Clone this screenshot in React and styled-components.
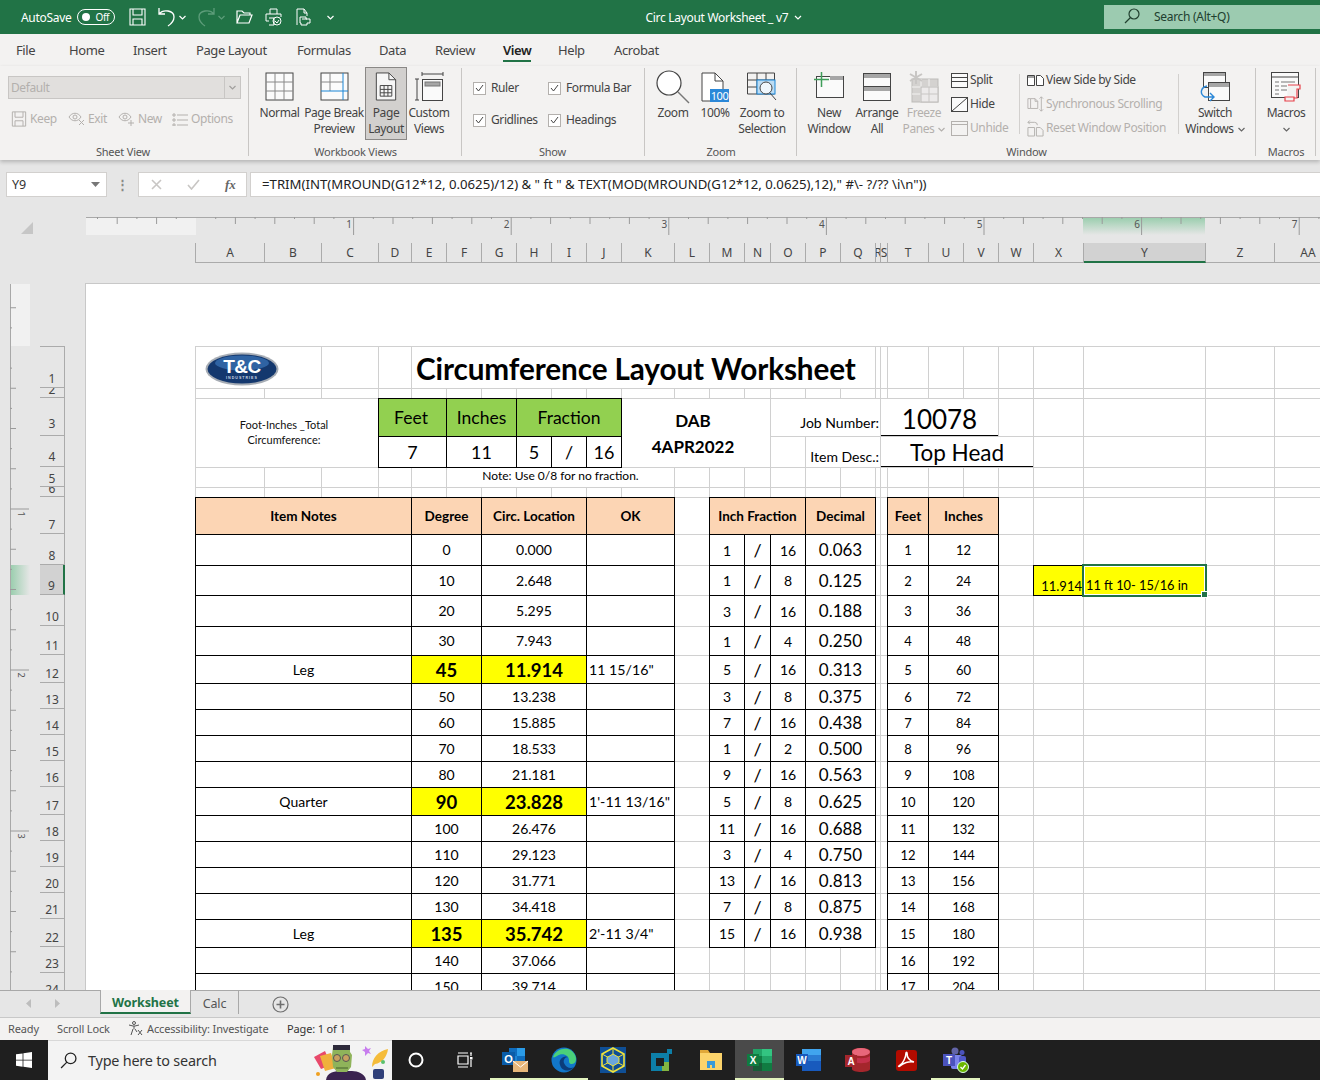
import React from 'react';
import styled, { createGlobalStyle } from 'styled-components';

const UI = '"Noto Sans", "Open Sans", sans-serif';
const SHEET = 'Lato, "Liberation Sans", sans-serif';

const Global = createGlobalStyle`
  html, body { margin: 0; padding: 0; background: #e6e6e6; }
  * { box-sizing: border-box; }
  svg { display: block; flex: none; }
`;

const Shell = styled.div`
  width: 1320px;
  height: 1080px;
  display: flex;
  flex-direction: column;
  overflow: hidden;
  font-family: ${UI};
  color: #333;
`;

/* title bar */
const TitleBar = styled.div`
  height: 34px;
  flex: none;
  background: #217346;
  color: #fff;
  display: flex;
  align-items: center;
  padding-left: 21px;
  font-size: 12px;
  letter-spacing: -0.3px;
`;
const Toggle = styled.div`
  width: 38px;
  height: 16px;
  margin-left: 6px;
  border: 1px solid #fff;
  border-radius: 8px;
  display: flex;
  align-items: center;
  padding-left: 4px;
  gap: 5px;
  font-size: 10px;
  &::before {
    content: '';
    width: 8px;
    height: 8px;
    border-radius: 50%;
    background: #fff;
  }
`;
const Qat = styled.div`
  display: flex;
  align-items: center;
  margin-left: ${(p) => p.$ml}px;
`;
const DocTitle = styled.div`
  margin-left: 311px;
  width: 142px;
  white-space: nowrap;
`;
const SearchBox = styled.div`
  margin-left: auto;
  width: 216px;
  height: 24px;
  padding: 0 0 2px 20px;
  background: #9ccbb0;
  color: #21402f;
  display: flex;
  align-items: center;
  gap: 14px;
`;

/* ribbon tabs */
const TabRow = styled.div`
  height: 32px;
  flex: none;
  background: #f3f2f1;
  display: flex;
  padding-left: 16px;
  font-size: 13px;
`;
const TabSlot = styled.div`
  width: ${(p) => p.$w}px;
  flex: none;
  display: flex;
`;
const RibbonTab = styled.div`
  height: 28px;
  padding-top: 6px;
  display: flex;
  align-items: center;
  white-space: nowrap;
  letter-spacing: -0.4px;
  font-weight: ${(p) => (p.$on ? 600 : 400)};
  border-bottom: ${(p) => (p.$on ? '2px solid #217346' : '2px solid transparent')};
  color: ${(p) => (p.$on ? '#222' : '#444')};
`;

/* ribbon */
const Ribbon = styled.div`
  height: 94px;
  flex: none;
  background: #f3f2f1;
  display: flex;
  padding-top: 2px;
  box-shadow: 0 2px 4px rgba(0, 0, 0, 0.22);
  position: relative;
  z-index: 2;
  font-size: 12px;
  letter-spacing: -0.4px;
  line-height: 16px;
`;
const Group = styled.div`
  width: ${(p) => p.$w}px;
  flex: none;
  position: relative;
  display: flex;
  flex-direction: column;
  &::after {
    content: '';
    position: absolute;
    right: 0;
    top: 0;
    bottom: 4px;
    width: 1px;
    background: #c8c6c4;
  }
`;
const GroupBody = styled.div`
  flex: 1;
  display: flex;
  padding-left: ${(p) => p.$pl || 0}px;
  margin-top: -1px;
`;
const GroupLabel = styled.div`
  height: 16px;
  text-align: center;
  font-size: 11px;
  color: #555;
  line-height: 16px;
  letter-spacing: -0.2px;
  padding-right: ${(p) => p.$pr || 0}px;
`;
const LargeBtn = styled.div`
  width: ${(p) => p.$w}px;
  height: 73px;
  flex: none;
  display: flex;
  flex-direction: column;
  align-items: center;
  text-align: center;
  white-space: nowrap;
  color: ${(p) => (p.$off ? '#b3b0ad' : '#444')};
  background: ${(p) => (p.$on ? '#d2d0ce' : 'transparent')};
  border: 1px solid ${(p) => (p.$on ? '#8a8886' : 'transparent')};
`;
const LargeIcon = styled.div`
  height: 37px;
  display: flex;
  align-items: center;
  justify-content: center;
`;
const BtnLine = styled.div`
  height: 16px;
  display: flex;
  align-items: center;
  gap: 4px;
`;
const Combo = styled.div`
  width: 233px;
  height: 23px;
  margin-top: 8px;
  background: #e1dfdd;
  border: 1px solid #c8c6c4;
  color: #b3b0ad;
  display: flex;
  align-items: center;
  padding-left: 2px;
  position: relative;
`;
const ComboArrow = styled.div`
  margin-left: auto;
  width: 16px;
  height: 100%;
  border-left: 1px solid #c8c6c4;
  display: flex;
  align-items: center;
  justify-content: center;
`;
const SheetViewBody = styled.div`
  padding-left: 8px;
  flex: 1;
`;
const SheetRow = styled.div`
  display: flex;
  align-items: center;
  height: 24px;
  margin-top: 8px;
  padding-left: 3px;
  color: #b3b0ad;
`;
const SheetBtn = styled.div`
  width: ${(p) => p.$w}px;
  display: flex;
  align-items: center;
  gap: 3px;
  flex: none;
`;
const ChecksGrid = styled.div`
  display: grid;
  grid-template-columns: 75px 90px;
  grid-auto-rows: 32px;
  padding: 4px 0 0 11px;
  white-space: nowrap;
  color: #444;
`;
const CheckItem = styled.div`
  display: flex;
  align-items: center;
  gap: 5px;
`;
const CheckBox = styled.div`
  width: 13px;
  height: 13px;
  background: #fff;
  border: 1px solid #b3b0ad;
  display: flex;
  align-items: center;
  justify-content: center;
`;
const SmallStack = styled.div`
  width: ${(p) => p.$w}px;
  flex: none;
  margin-left: ${(p) => p.$ml || 0}px;
  padding-left: ${(p) => p.$pl || 0}px;
  padding-top: 1px;
  display: flex;
  flex-direction: column;
  position: relative;
  &::after {
    content: '';
    position: absolute;
    right: 0;
    top: 7px;
    height: 60px;
    width: 1px;
    background: #d2d0ce;
  }
`;
const SmallBtn = styled.div`
  height: 24px;
  display: flex;
  align-items: center;
  gap: 2px;
  white-space: nowrap;
  color: ${(p) => (p.$off ? '#b3b0ad' : '#444')};
`;

/* formula bar */
const FormulaRow = styled.div`
  height: 40px;
  flex: none;
  background: #e6e6e6;
  display: flex;
  align-items: flex-start;
  padding: 12px 0 0 6px;
  font-size: 12.5px;
`;
const NameBox = styled.div`
  width: 101px;
  height: 25px;
  background: #fff;
  border: 1px solid #d2d0ce;
  display: flex;
  align-items: center;
  justify-content: space-between;
  padding: 0 6px 0 5px;
`;
const Dots = styled.div`
  width: 31px;
  height: 25px;
  display: flex;
  align-items: center;
  justify-content: center;
  color: #8a8886;
  font-weight: 700;
`;
const FnBox = styled.div`
  width: 109px;
  height: 25px;
  background: #fff;
  border: 1px solid #d2d0ce;
  display: flex;
  align-items: center;
  padding-left: 12px;
  gap: 25px;
`;
const FnMark = styled.span`
  font-family: "Liberation Serif", serif;
  font-style: italic;
  font-weight: 700;
  font-size: 13px;
  color: #666;
`;
const FormulaInput = styled.div`
  flex: 1;
  height: 25px;
  margin-left: 3px;
  background: #fff;
  border: 1px solid #d2d0ce;
  border-right: none;
  display: flex;
  align-items: center;
  padding: 0 0 2px 11px;
  white-space: nowrap;
  color: #222;
  font-size: 13.2px;
`;

/* sheet area */
const SheetArea = styled.div`
  flex: 1;
  min-height: 0;
  background: #e6e6e6;
  display: flex;
  flex-direction: column;
  overflow: hidden;
  padding-top: 17px;
`;
const RulerRow = styled.div`
  display: flex;
  height: 18px;
  flex: none;
`;
const CornerSlot = styled.div`
  width: 86px;
  flex: none;
  padding: 5px 0 0 21px;
`;
const ColHeaderRow = styled.div`
  display: flex;
  height: 20px;
  flex: none;
  margin: 8px 0 0 195px;
  border-left: 1px solid #ababab;
  font-size: 12px;
  color: #444;
`;
const ColHeader = styled.div`
  width: ${(p) => p.$w}px;
  flex: none;
  display: flex;
  align-items: center;
  justify-content: center;
  overflow: hidden;
  border-right: 1px solid #ababab;
  border-bottom: ${(p) => (p.$sel ? '2px solid #217346' : '1px solid #ababab')};
  background: ${(p) => (p.$sel ? '#d2d2d2' : 'transparent')};
`;
const SheetBody = styled.div`
  flex: 1;
  min-height: 0;
  display: flex;
  margin-top: 20px;
`;
const VRulerSlot = styled.div`
  margin: 1px 0 0 10px;
  width: 20px;
  flex: none;
`;
const RowHeaderCol = styled.div`
  margin-left: 10px;
  width: 25px;
  flex: none;
  padding-top: 63px;
  font-size: 12px;
  color: #444;
`;
const RowHeader = styled.div`
  height: ${(p) => p.$h}px;
  display: flex;
  align-items: flex-end;
  justify-content: center;
  overflow: hidden;
  line-height: 15px;
  padding-bottom: ${(p) => p.$pb}px;
  border-right: ${(p) => (p.$sel ? '2px solid #217346' : '1px solid #ababab')};
  border-bottom: 1px solid #ababab;
  border-top: ${(p) => (p.$first ? '1px solid #ababab' : 'none')};
  background: ${(p) => (p.$sel ? '#d2d2d2' : 'transparent')};
`;
const Page = styled.div`
  flex: 1;
  min-width: 0;
  margin-left: 20px;
  background: #fff;
  border-top: 1px solid #c8c8c8;
  border-left: 1px solid #c8c8c8;
  padding: 62px 0 0 109px;
  overflow: hidden;
`;
const Grid = styled.div`
  display: grid;
  width: max-content;
  border-top: 1px solid #d0d0d0;
  border-left: 1px solid #d0d0d0;
  grid-template-columns: ${(p) => p.$cols};
  grid-template-rows: ${(p) => p.$rows};
  font-family: ${SHEET};
  color: #000;
  font-size: 14px;
`;
const GridLine = styled.div`
  grid-column: ${(p) => p.$c};
  grid-row: ${(p) => p.$r};
  border-right: 1px solid #d0d0d0;
  border-bottom: 1px solid #d0d0d0;
`;
const Cell = styled.div`
  grid-column: ${(p) => p.$c} / span ${(p) => p.$cs || 1};
  grid-row: ${(p) => p.$r} / span ${(p) => p.$rs || 1};
  margin: 0 1px 1px 0;
  min-width: 0;
  display: flex;
  flex-direction: ${(p) => (p.$stack ? 'column' : 'row')};
  align-items: center;
  justify-content: ${(p) => p.$justify || 'center'};
  padding: ${(p) => p.$pad || 0};
  white-space: nowrap;
  overflow: hidden;
  background: ${(p) => p.$bg || '#fff'};
  box-shadow: ${(p) => (p.$box ? '0 0 0 1px #000' : 'none')};
  font-size: ${(p) => p.$fs || 14}px;
  font-weight: ${(p) => (p.$bold ? 700 : 400)};
  border-bottom: ${(p) => (p.$under ? '1px solid #000' : 'none')};
`;
const SmallNote = styled.div`
  font-size: 11px;
  line-height: 15px;
  color: #111;
`;
const TitleText = styled.div`
  font-size: 29.7px;
  font-weight: 700;
  letter-spacing: -0.1px;
`;
const InitialsLine = styled.div`
  font-size: 17px;
  font-weight: 700;
  line-height: 26px;
`;
const ActiveCell = styled.div`
  grid-column: 25;
  grid-row: 9;
  margin: 0 1px 1px 0;
  background: #ff0;
  display: flex;
  align-items: flex-end;
  padding: 0 0 2px 2px;
  white-space: nowrap;
  font-size: 12.8px;
  outline: 2px solid #217346;
  box-shadow: inset 0 0 0 1px #fff;
  position: relative;
  &::after {
    content: '';
    position: absolute;
    right: -3px;
    bottom: -3px;
    width: 5px;
    height: 5px;
    background: #217346;
    border: 1px solid #fff;
  }
`;

/* sheet tabs, status */
const TabsBar = styled.div`
  height: 28px;
  flex: none;
  background: #e6e6e6;
  border-top: 1px solid #a8a8a8;
  border-bottom: 1px solid #c8c8c8;
  display: flex;
  align-items: flex-start;
  font-size: 12.5px;
  position: relative;
  z-index: 2;
`;
const NavArrows = styled.div`
  width: 100px;
  height: 25px;
  display: flex;
  align-items: center;
  gap: 22px;
  padding-left: 26px;
`;
const SheetTab = styled.div`
  height: 24px;
  padding-top: 2px;
  margin-top: -1px;
  width: ${(p) => p.$w}px;
  display: flex;
  align-items: center;
  justify-content: center;
  letter-spacing: -0.1px;
  background: ${(p) => (p.$on ? '#f3f2f1' : 'transparent')};
  color: ${(p) => (p.$on ? '#217346' : '#555')};
  font-weight: ${(p) => (p.$on ? 700 : 400)};
  border-left: ${(p) => (p.$on ? '1px solid #a8a8a8' : 'none')};
  border-right: 1px solid #a8a8a8;
  border-bottom: ${(p) => (p.$on ? '2px solid #217346' : 'none')};
`;
const AddSheet = styled.div`
  margin: 5px 0 0 33px;
`;
const StatusBar = styled.div`
  height: 22px;
  flex: none;
  background: #f3f2f1;
  display: flex;
  align-items: center;
  font-size: 11px;
  letter-spacing: -0.15px;
  color: #555;
  padding: 0 0 2px 8px;
`;
const StatusItem = styled.div`
  width: ${(p) => p.$w}px;
  flex: none;
  white-space: nowrap;
  display: flex;
  align-items: center;
  gap: 4px;
  color: ${(p) => (p.$dark ? '#333' : '#555')};
`;

/* taskbar */
const Taskbar = styled.div`
  height: 40px;
  flex: none;
  background: #1f1f1f;
  display: flex;
  overflow: hidden;
`;
const StartBtn = styled.div`
  width: 48px;
  display: flex;
  align-items: center;
  justify-content: center;
`;
const TaskSearch = styled.div`
  width: 344px;
  background: #f3f3f3;
  border-top: 1px solid #d8d8d8;
  display: flex;
  align-items: center;
  padding-left: 12px;
  gap: 11px;
  font-size: 14.4px;
  color: #333;
  letter-spacing: -0.2px;
  overflow: hidden;
`;
const SearchText = styled.span`
  margin-top: -1px;
`;
const Mascot = styled.div`
  margin-left: auto;
  height: 40px;
  margin-right: 2px;
`;
const TaskBtn = styled.div`
  width: ${(p) => p.$w || 49}px;
  flex: none;
  display: flex;
  align-items: center;
  justify-content: center;
  background: ${(p) => (p.$active ? '#4a4a4a' : 'transparent')};
  border-bottom: 2px solid ${(p) => (p.$running ? '#e3f4bf' : 'transparent')};
  padding-top: 2px;
`;

/* ---- icons ---- */
const S = '#444';
const D = '#b3b0ad';

const GridIcon = ({ blue }) => (
  <svg width="29" height="29" viewBox="0 0 29 29" fill="#fbfbfb">
    <rect x="1" y="1" width="27" height="27" stroke={S} />
    <path d="M10 1v27M19 1v27M1 10h27M1 19h27" stroke={blue ? 'none' : '#888'} fill="none" />
    {blue && <path d="M10 1v18M1 10h22" stroke="#888" fill="none" />}
    {blue && <path d="M23 1v27M1 19h27" stroke="#1b86d6" fill="none" />}
  </svg>
);
const PageLayoutIcon = () => (
  <svg width="22" height="29" viewBox="0 0 22 30" fill="none" stroke={S}>
    <path d="M1 1h13l7 7v21H1z" fill="#f6f6f6" />
    <path d="M14 1v7h7" />
    <path d="M5 14h12v11H5zM5 18h12M5 21.5h12M9 14v11M13 14v11" />
  </svg>
);
const CustomViewsIcon = () => (
  <svg width="29" height="29" viewBox="0 0 29 29" fill="none" stroke={S}>
    <path d="M7 2h21M7 0v4M28 0v4M0 7h4M0 28h4M2 7v21" />
    <rect x="7.5" y="7.5" width="20" height="21" fill="#fafafa" />
    <rect x="10" y="10" width="15" height="4" fill="#a6a6a6" stroke="#777" />
  </svg>
);
const ZoomIcon = () => (
  <svg width="34" height="34" viewBox="0 0 34 34" fill="none">
    <circle cx="13" cy="13" r="12" stroke={S} strokeWidth="1.2" fill="#fff" />
    <path d="M22 22l11 11" stroke="#777" strokeWidth="1.4" />
  </svg>
);
const HundredIcon = () => (
  <svg width="28" height="30" viewBox="0 0 28 30">
    <path d="M1 1h13l8 8v20H1z" fill="#fff" stroke={S} />
    <path d="M14 1v8h8" fill="none" stroke={S} />
    <rect x="9" y="17" width="19" height="13" fill="#2b88d8" />
    <text x="18.5" y="27.5" textAnchor="middle" fontSize="11" fill="#fff" fontFamily="Noto Sans">100</text>
  </svg>
);
const ZoomSelIcon = () => (
  <svg width="30" height="30" viewBox="0 0 30 30" fill="none">
    <path d="M.5 1h27v21H.5zM.5 8h27M.5 15h10M10 1v21M19 1v7" stroke={S} />
    <rect x="10" y="8" width="18" height="14" fill="#bcdcf3" stroke="#1b86d6" />
    <circle cx="19" cy="16" r="6" fill="#eef6fc" stroke={S} />
    <path d="M23 21l6 7" stroke={S} />
  </svg>
);
const NewWindowIcon = () => (
  <svg width="32" height="30" viewBox="0 0 32 30" fill="none">
    <rect x="3.5" y="4.5" width="27" height="21" fill="#fafafa" stroke={S} />
    <rect x="17" y="4" width="13" height="4" fill="#a6a6a6" />
    <path d="M8.5 0v15M1 7.5h15" stroke="#3f9e5a" strokeWidth="1.5" />
  </svg>
);
const ArrangeIcon = () => (
  <svg width="28" height="28" viewBox="0 0 28 28" fill="#fafafa" stroke={S}>
    <rect x=".5" y=".5" width="27" height="13" />
    <rect x=".5" y="13.5" width="27" height="14" />
    <rect x="1" y="1" width="26" height="4" fill="#a6a6a6" stroke="none" />
    <rect x="1" y="14" width="26" height="4" fill="#a6a6a6" stroke="none" />
  </svg>
);
const FreezeIcon = () => (
  <svg width="30" height="32" viewBox="0 0 30 32" fill="none">
    <rect x="3" y="8" width="26" height="23" fill="#d4d2d0" stroke="#bdbbb9" />
    <path d="M3 16h26M3 23h26M12 8v23M20 8v23" stroke="#f3f2f1" />
    <rect x="12" y="16" width="17" height="15" fill="#eceaea" stroke="#bdbbb9" />
    <path d="M12 23h17M20 16v15" stroke="#c8c6c4" />
    <path d="M7 0v13M1 3l12 7M13 3L1 10" stroke="#c8c6c4" strokeWidth="2" />
  </svg>
);
const SplitIcon = () => (
  <svg width="17" height="15" viewBox="0 0 17 15" fill="#fafafa" stroke={S}>
    <rect x=".5" y=".5" width="16" height="14" />
    <path d="M1 4.5h15M1 8.5h15" />
  </svg>
);
const HideIcon = () => (
  <svg width="17" height="15" viewBox="0 0 17 15" fill="#fafafa" stroke={S}>
    <rect x=".5" y=".5" width="16" height="14" />
    <path d="M1 14L16 1" />
  </svg>
);
const UnhideIcon = () => (
  <svg width="17" height="15" viewBox="0 0 17 15" fill="#f3f2f1" stroke={D}>
    <rect x=".5" y=".5" width="16" height="14" />
    <path d="M1 3.5h15" />
  </svg>
);
const SideBySideIcon = () => (
  <svg width="17" height="12" viewBox="0 0 17 12" fill="#fff" stroke={S}>
    <path d="M.5 1.5h7v10h-7zM9.5 1.5h4l3 3v7h-7z" />
    <path d="M1 3h6" />
  </svg>
);
const SyncIcon = () => (
  <svg width="17" height="18" viewBox="0 0 19 18" fill="none" stroke={D}>
    <path d="M1 3h3M1 3v11h3M4 3h5l3 3v8H4zM9 3v3h3" />
    <path d="M16 1v16M14 3l2-2 2 2M14 15l2 2 2-2" />
  </svg>
);
const ResetIcon = () => (
  <svg width="17" height="18" viewBox="0 0 18 18" fill="none" stroke={D}>
    <path d="M1 8.5h7v9H1zM10 8.5h4l3 3v6h-7z" />
    <path d="M3 1L1 3l2 2M1 3h7a3 3 0 0 1 3 3" />
  </svg>
);
const SwitchIcon = () => (
  <svg width="30" height="30" viewBox="0 0 30 30" fill="none">
    <rect x="3.5" y=".5" width="22" height="15" fill="#fafafa" stroke={S} />
    <rect x="4" y="1" width="21" height="3" fill="#a6a6a6" />
    <rect x="8.5" y="10.5" width="21" height="18" fill="#fafafa" stroke={S} />
    <rect x="9" y="11" width="20" height="4" fill="#a6a6a6" />
    <path d="M7 14c-6 1-8 8-2 11h9M10 21l4 4-4 4" stroke="#2b88d8" strokeWidth="1.4" fill="none" />
  </svg>
);
const MacrosIcon = () => (
  <svg width="30" height="30" viewBox="0 0 30 30" fill="none">
    <rect x=".5" y=".5" width="27" height="25" fill="#fafafa" stroke={S} />
    <path d="M1 5h26" stroke={S} />
    <path d="M4 10h4M10 10h14M4 14h4M10 14h6M4 18h4M10 18h6M4 22h4" stroke="#777" />
    <path d="M17 13h12v4h-3v9h-10" fill="#f3f2f1" stroke="#e8404a" strokeWidth="1.2" />
    <path d="M14 25h9v4h-9z" fill="#f3f2f1" stroke="#e8404a" strokeWidth="1.2" />
  </svg>
);
const FloppyIcon = ({ c = D, w = 17, h = 18 }) => (
  <svg width={w} height={h} viewBox="0 0 17 18" fill="none" stroke={c} strokeWidth="1.1">
    <path d="M1 1h15v16H1zM4 1v6h9V1M4 17v-6h9v6" />
  </svg>
);
const Eye = ({ mark }) => (
  <svg width="17" height="14" viewBox="0 0 17 14" fill="none" stroke={D}>
    <path d="M1 5c3-5 9-5 12 0-3 5-9 5-12 0z" />
    <circle cx="7" cy="5" r="2" />
    {mark === 'x' ? <path d="M11 8l5 5M16 8l-5 5" /> : <path d="M13 8v6M10 11h6" />}
  </svg>
);
const ListIcon = () => (
  <svg width="16" height="13" viewBox="0 0 16 13" fill="none" stroke={D}>
    <path d="M1 1h2v2H1zM1 6h2v2H1zM1 11h2v2H1zM5 2h11M5 7h11M5 12h11" />
  </svg>
);
const Check = () => (
  <svg width="9" height="8" viewBox="0 0 9 8" fill="none" stroke="#444">
    <path d="M1 4l2.5 3L8 1" />
  </svg>
);
const Chevron = ({ c = '#666', w = 7 }) => (
  <svg width={w} height="5" viewBox="0 0 7 5" fill="none" stroke={c} strokeWidth="1.2">
    <path d="M.5 1l3 3 3-3" />
  </svg>
);
const Undo = ({ c }) => (
  <svg width="18" height="20" viewBox="0 0 18 20" fill="none" stroke={c} strokeWidth="1.3">
    <path d="M1 1v6h6M1 7c4-5 15-4 15 3 0 4-3 7-6 9" />
  </svg>
);
const Redo = ({ c }) => (
  <svg width="18" height="20" viewBox="0 0 18 20" fill="none" stroke={c} strokeWidth="1.3">
    <path d="M17 1v6h-6M17 7C13 2 2 3 2 10c0 4 3 7 6 9" />
  </svg>
);
const OpenIcon = () => (
  <svg width="17" height="14" viewBox="0 0 17 14" fill="none" stroke="#fff" strokeWidth="1.2">
    <path d="M1 13V1h5l2 2h6v2M1 13h12l3-8H4z" />
  </svg>
);
const PrintCheck = () => (
  <svg width="17" height="18" viewBox="0 0 17 18" fill="none" stroke="#fff">
    <path d="M5 6V1h7v5M4 13H1V6h15v3M4 10h5v7H4" />
    <circle cx="12" cy="13" r="4" />
    <path d="M10 13l2 2 2-3" />
  </svg>
);
const PrintDoc = () => (
  <svg width="16" height="18" viewBox="0 0 16 18" fill="none" stroke="#fff">
    <path d="M2 17V1h7l3 4v3M9 1v4h3" />
    <path d="M5 15V9h6v2h4v4h-3v2H6v-2zM12 11H7" />
  </svg>
);
const SearchGlyph = ({ c, s = 16 }) => (
  <svg width={s} height={s} viewBox="0 0 16 16" fill="none" stroke={c} strokeWidth="1.2">
    <circle cx="10" cy="6" r="5" />
    <path d="M6.5 9.5L1 15" />
  </svg>
);
const AccessIcon = () => (
  <svg width="15" height="15" viewBox="0 0 15 15" fill="none" stroke="#555">
    <circle cx="6" cy="2" r="1.5" />
    <path d="M1 4l4 1h2l4-1M6 5v3M5 8l-2 6M7 8l2 3M10 9l4 5M14 9l-4 5" />
  </svg>
);
const PlusCircle = () => (
  <svg width="17" height="17" viewBox="0 0 17 17" fill="none" stroke="#6f6f6f" strokeWidth="1.2">
    <circle cx="8.5" cy="8.5" r="7.5" />
    <path d="M8.5 4.5v8M4.5 8.5h8" strokeWidth="1.6" />
  </svg>
);
const TCLogo = () => (
  <svg width="74" height="34" viewBox="0 0 74 34">
    <ellipse cx="37" cy="17" rx="36.5" ry="16.5" fill="#a7adb5" />
    <ellipse cx="37" cy="17" rx="34.5" ry="14.5" fill="#14386e" />
    <ellipse cx="37" cy="11" rx="27" ry="7.5" fill="#2f63a3" />
    <text x="37" y="21" textAnchor="middle" fontSize="19" fontWeight="900" fill="#fff" fontFamily="Liberation Sans" letterSpacing="-0.5">T&amp;C</text>
    <text x="37" y="26.5" textAnchor="middle" fontSize="3.6" fontWeight="700" fill="#cbd6e4" letterSpacing="1" fontFamily="Liberation Sans">INDUSTRIES</text>
  </svg>
);

/* rulers */
const PX_IN = 157.6;
const TopRuler = () => {
  const w = 1234;
  const marks = [];
  for (let i = -5; i <= 60; i++) {
    const x = 196 - 86 + (i * PX_IN) / 8;
    if (x < 0 || x > w) continue;
    const len = i % 8 === 0 ? 18 : i % 2 === 0 ? 7 : 2;
    if (i === 0) continue;
    marks.push(<path key={i} d={`M${x} 0v${len}`} stroke="#9a9a9a" />);
  }
  return (
    <svg width={w} height="18" viewBox={`0 0 ${w} 18`}>
      <defs>
        <linearGradient id="topSel" x1="0" y1="0" x2="0" y2="1">
          <stop offset="0" stopColor="#98cdac" />
          <stop offset="1" stopColor="#e6e6e6" />
        </linearGradient>
      </defs>
      <rect x="0" y="0" width="110" height="18" fill="#f1f1f1" />
      <rect x="997" y="0" width="122" height="18" fill="url(#topSel)" />
      <path d={`M0 .5h${w}`} stroke="#a8a8a8" />
      {marks}
      {[1, 2, 3, 4, 5, 6, 7].map((n) => (
        <text key={n} x={110 + n * PX_IN - 4.5} y="11" textAnchor="middle" fontSize="10" fill="#555" fontFamily="Noto Sans">{n}</text>
      ))}
    </svg>
  );
};
const SideRuler = () => {
  const h = 706;
  const base = 64;
  const step = 161;
  const marks = [];
  for (let i = -2; i <= 40; i++) {
    const y = base + (i * step) / 8;
    if (y < 0 || y > h || i === 0) continue;
    const len = i % 8 === 0 ? 19 : i % 2 === 0 ? 6 : 2;
    marks.push(<path key={i} d={`M0 ${y}h${len}`} stroke="#9a9a9a" />);
  }
  return (
    <svg width="20" height={h} viewBox={`0 0 20 ${h}`}>
      <defs>
        <linearGradient id="sideSel" x1="0" y1="0" x2="1" y2="0">
          <stop offset="0" stopColor="#98cdac" />
          <stop offset="1" stopColor="#e6e6e6" />
        </linearGradient>
      </defs>
      <rect width="20" height="62" fill="#f1f1f1" />
      <rect y="281" width="20" height="30" fill="url(#sideSel)" />
      <path d={`M.5 0v${h}`} stroke="#a8a8a8" />
      {marks}
      {[1, 2, 3].map((n) => (
        <text key={n} transform={`translate(8 ${base + n * step + 5}) rotate(90)`} textAnchor="middle" fontSize="9" fill="#555" fontFamily="Noto Sans">{n}</text>
      ))}
    </svg>
  );
};

/* taskbar art */
const WinLogo = () => (
  <svg width="16" height="16" viewBox="0 0 16 16" fill="#fff">
    <path d="M0 2.3l6.6-.9v6.3H0zM7.4 1.3L16 0v7.7H7.4zM0 8.4h6.6v6.3L0 13.8zM7.4 8.4H16V16l-8.6-1.2z" />
  </svg>
);
const MascotArt = () => (
  <svg width="78" height="40" viewBox="0 0 78 40">
    <path d="M2 16l11-6 6 14-10 4z" fill="#e8496b" />
    <path d="M8 15l11-3 5 15-11 3z" fill="#f0b03c" />
    <circle cx="6" cy="33" r="2" fill="#f0a020" />
    <path d="M14 40c0-8 8-10 14-10h12c6 0 14 3 14 10z" fill="#3b2350" />
    <path d="M21 6h17v5l2 3-1 12-4 5H25l-4-5-1-12z" fill="#8fb35a" />
    <path d="M21 4h17v5H21z" fill="#2d2a3a" />
    <circle cx="25" cy="17" r="3.5" fill="#c8a060" stroke="#555" />
    <circle cx="34" cy="17" r="3.5" fill="#c8a060" stroke="#555" />
    <path d="M24 27h12" stroke="#45602c" />
    <path d="M53 5l3 3 3-1-2 3 2 3-3-1-3 3v-4l-3-2 3-1z" fill="#c77dee" />
    <path d="M60 26c0-9 6-16 16-18-1 8-6 14-13 15z" fill="#f5bc3a" />
    <rect x="61" y="28" width="11" height="10" rx="2" fill="#2f3f78" />
    <circle cx="71" cy="21" r="2" fill="#5bc16d" />
  </svg>
);
const Ring = () => (
  <svg width="16" height="16" viewBox="0 0 16 16" fill="none" stroke="#fff" strokeWidth="2">
    <circle cx="8" cy="8" r="6.5" />
  </svg>
);
const TaskView = () => (
  <svg width="16" height="16" viewBox="0 0 16 16" fill="none" stroke="#fff" strokeWidth="1.2">
    <path d="M1 4h10v8H1zM1 1h10M1 15h10M13 1h2M14 1v3M14 8v7" />
    <rect x="13" y="5" width="2.5" height="2.5" fill="#fff" stroke="none" />
  </svg>
);
const OutlookIcon = () => (
  <svg width="28" height="28" viewBox="0 0 28 28">
    <rect x="8" y="2" width="16" height="16" fill="#0f6cbd" />
    <rect x="16" y="2" width="8" height="8" fill="#2a9be8" />
    <rect x="8" y="10" width="8" height="8" fill="#1b84d6" />
    <rect x="1" y="6" width="13" height="13" fill="#0a5ca8" />
    <text x="7.5" y="16.5" textAnchor="middle" fontSize="11" fontWeight="700" fill="#fff" fontFamily="Liberation Sans">O</text>
    <rect x="12" y="15" width="15" height="11" fill="#e8b77a" />
    <path d="M12 15l7.5 6 7.5-6" fill="none" stroke="#fff" />
  </svg>
);
const EdgeIcon = () => (
  <svg width="26" height="26" viewBox="0 0 26 26">
    <circle cx="13" cy="13" r="12.5" fill="#1277c9" />
    <path d="M2 10C5 1 19-2 24 8c2 4 1 9-3 9-3 0-3-2-3-4 0-5-7-8-12-4-2 1-3 2-4 1z" fill="#4ad07a" />
    <path d="M9 18c-2-6 4-10 8-8-3 0-5 3-4 6 2 5 7 6 10 4-3 5-12 5-14-2z" fill="#0b3c7a" />
  </svg>
);
const WebIcon = () => (
  <svg width="26" height="26" viewBox="0 0 26 26">
    <rect x="0" y="0" width="26" height="26" fill="#0f4f96" />
    <path d="M13 1l11 6v12l-11 6-11-6V7z" fill="none" stroke="#f0e33c" strokeWidth="1.6" />
    <path d="M13 1v24M2 7l22 12M24 7L2 19" stroke="#f0e33c" />
    <path d="M13 7l6 3.5v5L13 19l-6-3.5v-5z" fill="#6aa6dc" stroke="#f0e33c" />
  </svg>
);
const SquareIcon = () => (
  <svg width="24" height="24" viewBox="0 0 24 24">
    <rect x="1" y="5" width="18" height="18" fill="#0d7fa8" />
    <path d="M12 14h7v9h-7z" fill="#82b541" />
    <rect x="6" y="10" width="8" height="8" fill="#1f1f1f" />
    <rect x="17" y="1" width="5" height="5" fill="#0d7fa8" />
  </svg>
);
const FolderIcon = () => (
  <svg width="22" height="20" viewBox="0 0 22 20">
    <path d="M0 0h8l2 3h12v17H0z" fill="#e0a83a" />
    <rect x="0" y="3" width="22" height="17" fill="#fbd36b" />
    <path d="M7 18v-7h8v7h-3v-3h-2v3z" fill="#3a9ad9" />
  </svg>
);
const ExcelIcon = () => (
  <svg width="25" height="24" viewBox="0 0 25 24">
    <rect x="6" y="1" width="19" height="22" fill="#185c37" />
    <rect x="15" y="1" width="10" height="7" fill="#33c481" />
    <rect x="6" y="1" width="9" height="7" fill="#21a366" />
    <rect x="6" y="8" width="9" height="7" fill="#107c41" />
    <rect x="15" y="8" width="10" height="7" fill="#21a366" />
    <rect x="15" y="15" width="10" height="8" fill="#107c41" />
    <rect x="0" y="6" width="12" height="12" fill="#107c41" />
    <text x="6" y="16" textAnchor="middle" fontSize="10" fontWeight="700" fill="#fff" fontFamily="Liberation Sans">X</text>
  </svg>
);
const WordIcon = () => (
  <svg width="25" height="24" viewBox="0 0 25 24">
    <rect x="6" y="1" width="19" height="22" fill="#185abd" />
    <rect x="6" y="1" width="19" height="6" fill="#41a5ee" />
    <rect x="6" y="7" width="19" height="6" fill="#2b7cd3" />
    <rect x="0" y="6" width="12" height="12" fill="#185abd" />
    <text x="6" y="16" textAnchor="middle" fontSize="10" fontWeight="700" fill="#fff" fontFamily="Liberation Sans">W</text>
  </svg>
);
const AccessAppIcon = () => (
  <svg width="26" height="24" viewBox="0 0 26 24">
    <path d="M7 3c0-4 18-4 18 0v18c0 4-18 4-18 0z" fill="#a4262c" />
    <ellipse cx="16" cy="4" rx="9" ry="4" fill="#e8677a" />
    <path d="M7 8c4 3 14 3 18 0v5c-4 3-14 3-18 0z" fill="#c4314b" />
    <rect x="0" y="7" width="12" height="12" fill="#a4262c" />
    <text x="6" y="17" textAnchor="middle" fontSize="10" fontWeight="700" fill="#fff" fontFamily="Liberation Sans">A</text>
  </svg>
);
const AcrobatIcon = () => (
  <svg width="21" height="21" viewBox="0 0 21 21">
    <rect width="21" height="21" rx="3" fill="#b30b00" />
    <path d="M3 16c4-2 7-9 7-13 0-1 1-1 1 0 0 5 3 8 7 9-5-1-11 1-14 4-1 1-2 0-1 0z" fill="none" stroke="#fff" strokeWidth="1.5" />
  </svg>
);
const TeamsIcon = () => (
  <svg width="26" height="26" viewBox="0 0 26 26">
    <circle cx="12" cy="4" r="3.5" fill="#6264a7" />
    <circle cx="19" cy="5.5" r="2.5" fill="#4b53bc" />
    <rect x="8" y="8" width="11" height="14" rx="2" fill="#7b83eb" />
    <rect x="16" y="9" width="7" height="11" rx="2" fill="#5059c9" />
    <rect x="0" y="7" width="12" height="12" fill="#4b53bc" />
    <text x="6" y="17" textAnchor="middle" fontSize="10" fontWeight="700" fill="#fff" fontFamily="Liberation Sans">T</text>
    <circle cx="20" cy="20" r="5.5" fill="#6bb700" stroke="#dfe" />
    <path d="M17.5 20l2 2 3-4" fill="none" stroke="#fff" strokeWidth="1.3" />
  </svg>
);

/* ---- data ---- */
const COLS = ['A','B','C','D','E','F','G','H','I','J','K','L','M','N','O','P','Q','R','S','T','U','V','W','X','Y','Z','AA'];
const COL_W = [69,57,57,33,35,35,35,35,35,35,53,35,35,26,35,35,35,5,7,41,35,35,35,50,122,69,67];
const ROW_H = [42,10,38,31,20,10,37,31,30,31,29,28,26,26,26,26,28,26,26,26,26,28,26,26];
const ROW_LIFT = { 1: 1, 2: 0, 3: 4, 4: 2, 5: 0, 6: 0 };
const TALL_ROWS = [8, 10, 11];

const READINGS = [
  ['', 0, '0.000'], ['', 10, '2.648'], ['', 20, '5.295'], ['', 30, '7.943'],
  ['Leg', 45, '11.914', '11 15/16"'], ['', 50, '13.238'], ['', 60, '15.885'], ['', 70, '18.533'],
  ['', 80, '21.181'], ['Quarter', 90, '23.828', `1'-11 13/16"`], ['', 100, '26.476'], ['', 110, '29.123'],
  ['', 120, '31.771'], ['', 130, '34.418'], ['Leg', 135, '35.742', `2'-11 3/4"`], ['', 140, '37.066'], ['', 150, '39.714'],
];
const FRACTIONS = [
  [1,16,'0.063'],[1,8,'0.125'],[3,16,'0.188'],[1,4,'0.250'],[5,16,'0.313'],[3,8,'0.375'],[7,16,'0.438'],[1,2,'0.500'],
  [9,16,'0.563'],[5,8,'0.625'],[11,16,'0.688'],[3,4,'0.750'],[13,16,'0.813'],[7,8,'0.875'],[15,16,'0.938'],
];
const PEACH = '#fcd5b4';
const GREEN = '#92d050';
const YELLOW = '#ffff00';

const TABS = [['File',53],['Home',64],['Insert',63],['Page Layout',101],['Formulas',82],['Data',56],['Review',68],['View',55],['Help',56],['Acrobat',60]];

const Sheet = () => {
  const gridLines = [];
  ROW_H.forEach((_, r) => COLS.forEach((_, c) => gridLines.push(<GridLine key={`${r}-${c}`} $r={r + 1} $c={c + 1} />)));
  return (
    <Grid $cols={COL_W.map((w) => `${w}px`).join(' ')} $rows={ROW_H.map((h) => `${h}px`).join(' ')}>
      {gridLines}
      <Cell $r={1} $c={1} $cs={2} $justify="flex-start" $pad="2px 0 0 9px"><TCLogo /></Cell>
      <Cell $r={1} $c={5} $cs={13} $justify="flex-start" $pad="2px 0 0 4px"><TitleText>Circumference Layout Worksheet</TitleText></Cell>

      <Cell $r={3} $c={1} $cs={3} $rs={2} $stack $pad="0 6px 2px 0">
        <SmallNote>Foot-Inches _Total</SmallNote>
        <SmallNote>Circumference:</SmallNote>
      </Cell>
      <Cell $r={3} $c={4} $cs={2} $box $bg={GREEN} $fs={17.5} $pad="0 3px 0 0">Feet</Cell>
      <Cell $r={3} $c={6} $cs={2} $box $bg={GREEN} $fs={17.5}>Inches</Cell>
      <Cell $r={3} $c={8} $cs={3} $box $bg={GREEN} $fs={17.5}>Fraction</Cell>
      <Cell $r={4} $c={4} $cs={2} $box $fs={18}>7</Cell>
      <Cell $r={4} $c={6} $cs={2} $box $fs={18}>11</Cell>
      <Cell $r={4} $c={8} $box $fs={18}>5</Cell>
      <Cell $r={4} $c={9} $box $fs={18}>/</Cell>
      <Cell $r={4} $c={10} $box $fs={18}>16</Cell>
      <Cell $r={3} $c={11} $cs={4} $rs={2} $stack $pad="2px 6px 0 0">
        <InitialsLine>DAB</InitialsLine>
        <InitialsLine>4APR2022</InitialsLine>
      </Cell>
      <Cell $r={3} $c={15} $cs={4} $justify="flex-end" $pad="10px 1px 0 0" $fs={14}>Job Number:</Cell>
      <Cell $r={3} $c={19} $cs={4} $under $fs={26} $pad="3px 0 0 0">10078</Cell>
      <Cell $r={4} $c={16} $cs={3} $justify="flex-end" $pad="8px 1px 0 0" $fs={14}>Item Desc.:</Cell>
      <Cell $r={4} $c={19} $cs={5} $under $fs={22.5} $pad="2px 0 0 0">Top Head</Cell>
      <Cell $r={5} $c={6} $cs={6} $fs={12} $pad="0 0 4px 0">Note: Use 0/8 for no fraction.</Cell>

      <Cell $r={7} $c={1} $cs={4} $box $bg={PEACH} $bold $fs={13.5}>Item Notes</Cell>
      <Cell $r={7} $c={5} $cs={2} $box $bg={PEACH} $bold $fs={13.5}>Degree</Cell>
      <Cell $r={7} $c={7} $cs={3} $box $bg={PEACH} $bold $fs={13.5}>Circ. Location</Cell>
      <Cell $r={7} $c={10} $cs={2} $box $bg={PEACH} $bold $fs={13.5}>OK</Cell>
      <Cell $r={7} $c={13} $cs={3} $box $bg={PEACH} $bold $fs={13.5}>Inch Fraction</Cell>
      <Cell $r={7} $c={16} $cs={2} $box $bg={PEACH} $bold $fs={13.5}>Decimal</Cell>
      <Cell $r={7} $c={20} $box $bg={PEACH} $bold $fs={13.5}>Feet</Cell>
      <Cell $r={7} $c={21} $cs={2} $box $bg={PEACH} $bold $fs={13.5}>Inches</Cell>

      {READINGS.map(([note, deg, loc, ok], i) => {
        const r = i + 8;
        const hot = Boolean(note);
        const pad = TALL_ROWS.includes(r) ? '0 0 2px 0' : undefined;
        return (
          <React.Fragment key={deg}>
            <Cell $r={r} $c={1} $cs={4} $box>{note}</Cell>
            <Cell $r={r} $c={5} $cs={2} $box $pad={pad} $bg={hot ? YELLOW : undefined} $bold={hot} $fs={hot ? 18.5 : 14}>{deg}</Cell>
            <Cell $r={r} $c={7} $cs={3} $box $pad={pad} $bg={hot ? YELLOW : undefined} $bold={hot} $fs={hot ? 18.5 : 14}>{loc}</Cell>
            <Cell $r={r} $c={10} $cs={2} $box $justify="flex-start" $pad="0 0 0 2px" $fs={14.2}>{ok}</Cell>
            <Cell $r={r} $c={20} $box $fs={13}>{i + 1}</Cell>
            <Cell $r={r} $c={21} $cs={2} $box $fs={13}>{(i + 1) * 12}</Cell>
          </React.Fragment>
        );
      })}

      {FRACTIONS.map(([a, b, dec], i) => {
        const r = i + 8;
        const pad = TALL_ROWS.includes(r) ? '0 0 2px 0' : undefined;
        return (
          <React.Fragment key={dec}>
            <Cell $r={r} $c={13} $box>{a}</Cell>
            <Cell $r={r} $c={14} $box $fs={18}>/</Cell>
            <Cell $r={r} $c={15} $box>{b}</Cell>
            <Cell $r={r} $c={16} $cs={2} $box $pad={pad} $fs={17}>{dec}</Cell>
          </React.Fragment>
        );
      })}

      <Cell $r={9} $c={24} $box $bg={YELLOW} $justify="flex-end" $pad="10px 1px 0 0" $fs={13}>11.914</Cell>
      <ActiveCell>11 ft 10- 15/16 in</ActiveCell>
    </Grid>
  );
};

export default function App() {
  return (
    <Shell>
      <Global />
      <TitleBar>
        AutoSave
        <Toggle>Off</Toggle>
        <Qat $ml={14}><FloppyIcon c="#fff" /></Qat>
        <Qat $ml={12}><Undo c="#fff" /></Qat>
        <Qat $ml={3}><Chevron c="#fff" /></Qat>
        <Qat $ml={11}><Redo c="#5d9d7a" /></Qat>
        <Qat $ml={3}><Chevron c="#5d9d7a" /></Qat>
        <Qat $ml={11}><OpenIcon /></Qat>
        <Qat $ml={12}><PrintCheck /></Qat>
        <Qat $ml={13}><PrintDoc /></Qat>
        <Qat $ml={16}><Chevron c="#fff" /></Qat>
        <DocTitle>Circ Layout Worksheet _ v7</DocTitle>
        <Qat $ml={6}><Chevron c="#fff" w={10} /></Qat>
        <SearchBox><SearchGlyph c="#21402f" />Search (Alt+Q)</SearchBox>
      </TitleBar>

      <TabRow>
        {TABS.map(([name, w]) => (
          <TabSlot key={name} $w={w}>
            <RibbonTab $on={name === 'View'}>{name}</RibbonTab>
          </TabSlot>
        ))}
      </TabRow>

      <Ribbon>
        <Group $w={249}>
          <SheetViewBody>
            <Combo>Default<ComboArrow><Chevron c="#a19f9d" /></ComboArrow></Combo>
            <SheetRow>
              <SheetBtn $w={57}><FloppyIcon w={16} h={16} />Keep</SheetBtn>
              <SheetBtn $w={50}><Eye mark="x" />Exit</SheetBtn>
              <SheetBtn $w={54}><Eye />New</SheetBtn>
              <SheetBtn $w={70}><ListIcon />Options</SheetBtn>
            </SheetRow>
          </SheetViewBody>
          <GroupLabel $pr={3}>Sheet View</GroupLabel>
        </Group>

        <Group $w={213}>
          <GroupBody $pl={7}>
            <LargeBtn $w={47}><LargeIcon><GridIcon /></LargeIcon>Normal</LargeBtn>
            <LargeBtn $w={62}><LargeIcon><GridIcon blue /></LargeIcon>Page Break<br />Preview</LargeBtn>
            <LargeBtn $w={42} $on><LargeIcon><PageLayoutIcon /></LargeIcon>Page<br />Layout</LargeBtn>
            <LargeBtn $w={44}><LargeIcon><CustomViewsIcon /></LargeIcon>Custom<br />Views</LargeBtn>
          </GroupBody>
          <GroupLabel>Workbook Views</GroupLabel>
        </Group>

        <Group $w={183}>
          <ChecksGrid>
            <CheckItem><CheckBox><Check /></CheckBox>Ruler</CheckItem>
            <CheckItem><CheckBox><Check /></CheckBox>Formula Bar</CheckItem>
            <CheckItem><CheckBox><Check /></CheckBox>Gridlines</CheckItem>
            <CheckItem><CheckBox><Check /></CheckBox>Headings</CheckItem>
          </ChecksGrid>
          <GroupBody />
          <GroupLabel $pr={2}>Show</GroupLabel>
        </Group>

        <Group $w={152}>
          <GroupBody $pl={7}>
            <LargeBtn $w={42}><LargeIcon><ZoomIcon /></LargeIcon>Zoom</LargeBtn>
            <LargeBtn $w={42}><LargeIcon><HundredIcon /></LargeIcon>100%</LargeBtn>
            <LargeBtn $w={52}><LargeIcon><ZoomSelIcon /></LargeIcon>Zoom to<br />Selection</LargeBtn>
          </GroupBody>
          <GroupLabel>Zoom</GroupLabel>
        </Group>

        <Group $w={459}>
          <GroupBody $pl={10}>
            <LargeBtn $w={44}><LargeIcon><NewWindowIcon /></LargeIcon>New<br />Window</LargeBtn>
            <LargeBtn $w={52}><LargeIcon><ArrangeIcon /></LargeIcon>Arrange<br />All</LargeBtn>
            <LargeBtn $w={42} $off><LargeIcon><FreezeIcon /></LargeIcon>Freeze<BtnLine>Panes<Chevron c="#b3b0ad" /></BtnLine></LargeBtn>
            <SmallStack $w={69} $ml={6}>
              <SmallBtn><SplitIcon />Split</SmallBtn>
              <SmallBtn><HideIcon />Hide</SmallBtn>
              <SmallBtn $off><UnhideIcon />Unhide</SmallBtn>
            </SmallStack>
            <SmallStack $w={159} $pl={7}>
              <SmallBtn><SideBySideIcon />View Side by Side</SmallBtn>
              <SmallBtn $off><SyncIcon />Synchronous Scrolling</SmallBtn>
              <SmallBtn $off><ResetIcon />Reset Window Position</SmallBtn>
            </SmallStack>
            <LargeBtn $w={72}><LargeIcon><SwitchIcon /></LargeIcon>Switch<BtnLine>Windows<Chevron /></BtnLine></LargeBtn>
          </GroupBody>
          <GroupLabel>Window</GroupLabel>
        </Group>

        <Group $w={60}>
          <GroupBody>
            <LargeBtn $w={60}><LargeIcon><MacrosIcon /></LargeIcon>Macros<BtnLine><Chevron /></BtnLine></LargeBtn>
          </GroupBody>
          <GroupLabel>Macros</GroupLabel>
        </Group>
      </Ribbon>

      <FormulaRow>
        <NameBox>
          Y9
          <svg width="9" height="5" viewBox="0 0 9 5" fill="#777"><path d="M0 0h9L4.5 5z" /></svg>
        </NameBox>
        <Dots>⋮</Dots>
        <FnBox>
          <svg width="11" height="11" viewBox="0 0 11 11" stroke="#c8c6c4" strokeWidth="1.6"><path d="M1 1l9 9M10 1l-9 9" /></svg>
          <svg width="13" height="11" viewBox="0 0 13 11" fill="none" stroke="#c8c6c4" strokeWidth="1.6"><path d="M1 6l3.5 4L12 1" /></svg>
          <FnMark>fx</FnMark>
        </FnBox>
        <FormulaInput>{'=TRIM(INT(MROUND(G12*12, 0.0625)/12) & " ft " & TEXT(MOD(MROUND(G12*12, 0.0625),12)," #\\- ?/?? \\i\\n"))'}</FormulaInput>
      </FormulaRow>

      <SheetArea>
        <RulerRow>
          <CornerSlot>
            <svg width="12" height="12" viewBox="0 0 12 12"><path d="M12 0v12H0z" fill="#c6c6c6" /></svg>
          </CornerSlot>
          <TopRuler />
        </RulerRow>
        <ColHeaderRow>
          {COLS.map((c, i) => (
            <ColHeader key={c} $w={COL_W[i]} $sel={c === 'Y'}>{c}</ColHeader>
          ))}
        </ColHeaderRow>
        <SheetBody>
          <VRulerSlot><SideRuler /></VRulerSlot>
          <RowHeaderCol>
            {ROW_H.map((h, i) => (
              <RowHeader key={i} $h={h} $first={i === 0} $sel={i === 8} $pb={ROW_LIFT[i + 1] ?? 1}>{i + 1}</RowHeader>
            ))}
          </RowHeaderCol>
          <Page><Sheet /></Page>
        </SheetBody>
      </SheetArea>

      <TabsBar>
        <NavArrows>
          <svg width="6" height="9" viewBox="0 0 6 9" fill="#bdbdbd"><path d="M5 0v9L0 4.5z" /></svg>
          <svg width="6" height="9" viewBox="0 0 6 9" fill="#bdbdbd"><path d="M1 0v9l5-4.5z" /></svg>
        </NavArrows>
        <SheetTab $w={91} $on>Worksheet</SheetTab>
        <SheetTab $w={48}>Calc</SheetTab>
        <AddSheet><PlusCircle /></AddSheet>
      </TabsBar>

      <StatusBar>
        <StatusItem $w={49}>Ready</StatusItem>
        <StatusItem $w={71}>Scroll Lock</StatusItem>
        <StatusItem $w={159}><AccessIcon />Accessibility: Investigate</StatusItem>
        <StatusItem $w={80} $dark>Page: 1 of 1</StatusItem>
      </StatusBar>

      <Taskbar>
        <StartBtn><WinLogo /></StartBtn>
        <TaskSearch>
          <SearchGlyph c="#222" s={17} />
          <SearchText>Type here to search</SearchText>
          <Mascot><MascotArt /></Mascot>
        </TaskSearch>
        <TaskBtn $w={48}><Ring /></TaskBtn>
        <TaskBtn $w={50}><TaskView /></TaskBtn>
        <TaskBtn $running><OutlookIcon /></TaskBtn>
        <TaskBtn $running><EdgeIcon /></TaskBtn>
        <TaskBtn><WebIcon /></TaskBtn>
        <TaskBtn><SquareIcon /></TaskBtn>
        <TaskBtn><FolderIcon /></TaskBtn>
        <TaskBtn $active $running><ExcelIcon /></TaskBtn>
        <TaskBtn><WordIcon /></TaskBtn>
        <TaskBtn><AccessAppIcon /></TaskBtn>
        <TaskBtn><AcrobatIcon /></TaskBtn>
        <TaskBtn $running><TeamsIcon /></TaskBtn>
      </Taskbar>
    </Shell>
  );
}
